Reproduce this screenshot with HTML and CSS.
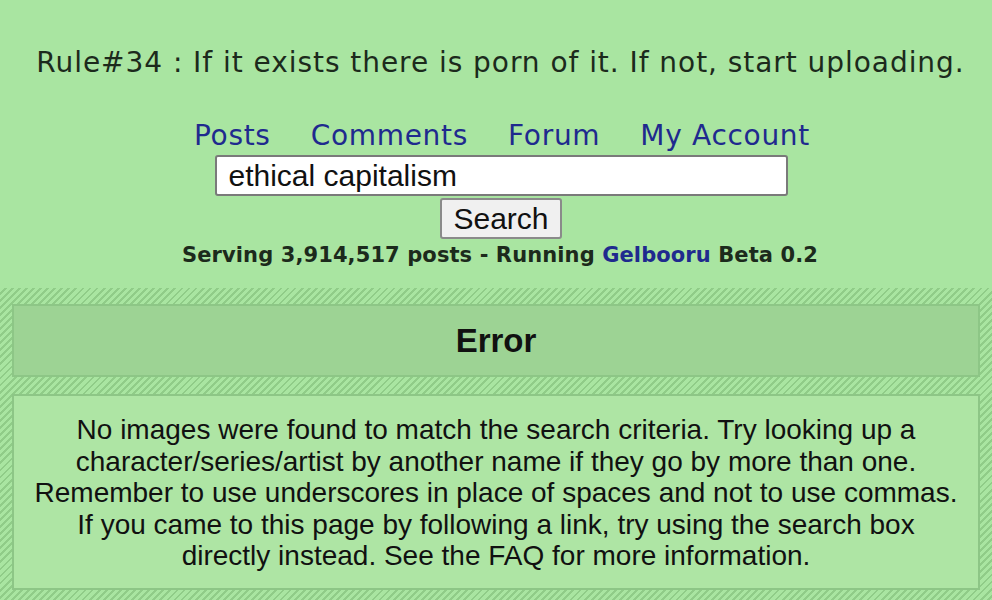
FILE: index.html
```html
<!DOCTYPE html>
<html>
<head>
<meta charset="utf-8">
<link rel="stylesheet" href="styles.css">
</head>
<body>
<div class="top">
  <h2 class="rule">Rule#34 : If it exists there is porn of it. If not, start uploading.</h2>
  <nav class="nav">
    <a href="#">Posts</a>
    <a href="#">Comments</a>
    <a href="#">Forum</a>
    <a href="#">My Account</a>
  </nav>
  <form class="search">
    <input class="search-input" type="text" value="ethical capitalism">
    <button class="search-btn" type="button">Search</button>
  </form>
  <div class="serving">Serving 3,914,517 posts - Running <a href="#">Gelbooru</a> Beta 0.2</div>
</div>
<div class="content">
  <div class="box error-box">Error</div>
  <div class="box msg-box">No images were found to match the search criteria. Try looking up a<br>character/series/artist by another name if they go by more than one.<br>Remember to use underscores in place of spaces and not to use commas.<br>If you came to this page by following a link, try using the search box<br>directly instead. See the FAQ for more information.</div>
</div>
</body>
</html>
```
FILE: styles.css
```css
html, body {
  margin: 0;
  padding: 0;
  background: #a9e5a1;
  height: 100%;
}
body {
  font-family: "DejaVu Sans", Verdana, sans-serif;
  color: #1c2a1c;
  overflow: hidden;
}
.top {
  text-align: center;
  padding-top: 45px;
  height: 243px;
}
.rule {
  font-size: 28px;
  font-weight: normal;
  margin: 0;
  line-height: 36px;
  letter-spacing: 0.95px;
  padding-left: 9px;
  white-space: nowrap;
}
.nav {
  margin-top: 38px;
  display: flex;
  justify-content: center;
  gap: 40px;
  font-size: 28px;
  letter-spacing: 0.7px;
  line-height: 34px;
  padding-left: 12px;
}
.nav a, .serving a {
  color: #1f2a8e;
  text-decoration: none;
}
.search {
  display: flex;
  flex-direction: column;
  align-items: center;
  margin: 0;
  padding-top: 2px;
}
.search-input {
  width: 573px;
  height: 41px;
  box-sizing: border-box;
  border: 2px solid #7a7a7a;
  border-radius: 3px;
  font-family: "Liberation Sans", Arial, sans-serif;
  font-size: 30px;
  padding: 0 12px;
  color: #111;
  margin-left: 10px;
}
.search-btn {
  margin-top: 2px;
  margin-left: 10px;
  width: 122px;
  height: 41px;
  font-family: "Liberation Sans", Arial, sans-serif;
  font-size: 30px;
  background: #f0f0f0;
  border: 2px solid #8a8a8a;
  border-radius: 3px;
  color: #111;
  padding: 0;
}
.serving {
  font-size: 21px;
  font-weight: bold;
  margin-top: 1px;
  line-height: 30px;
  padding-left: 8px;
  letter-spacing: 0.1px;
  color: #1c2a1c;
}
.content {
  background: repeating-linear-gradient(135deg, #a9e5a1 0 3px, #90cc88 3px 5px);
  padding: 16px 12px 10px;
  height: 312px;
  box-sizing: border-box;
  display: flex;
  flex-direction: column;
  gap: 17px;
}
.box {
  border: 2px solid #8dc686;
  text-align: center;
  font-family: "Liberation Sans", Arial, sans-serif;
  color: #111;
}
.error-box {
  background: #9dd394;
  height: 73px;
  box-sizing: border-box;
  font-size: 33px;
  font-weight: bold;
  line-height: 69px;
}
.msg-box {
  background: #aee5a4;
  font-size: 28px;
  line-height: 31.6px;
  padding: 18px 0 16px;
}
```
